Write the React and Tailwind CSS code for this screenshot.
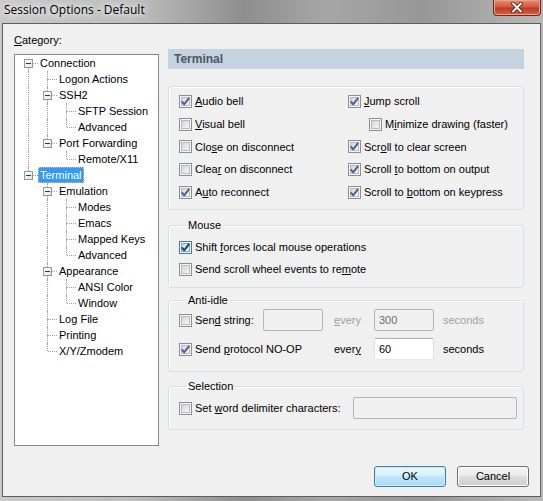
import React from 'react';

// Win7 style checkbox
const Check = ({ checked, hot }) => (
  <svg width="13" height="13" viewBox="0 0 13 13" className="shrink-0">
    <defs>
      <linearGradient id="cbInner" x1="0" y1="0" x2="1" y2="1">
        <stop offset="0" stopColor="#cfd3d8" />
        <stop offset="1" stopColor="#f8f8f8" />
      </linearGradient>
    </defs>
    <rect x="0.5" y="0.5" width="12" height="12" fill="#f5f5f5" stroke={hot ? '#3c7fb1' : '#8e8f8f'} />
    <rect x="2.5" y="2.5" width="8" height="8" fill="url(#cbInner)" stroke={hot ? '#79a9cf' : '#b8bcc1'} />
    {checked && (
      <path d="M2.8 6.4 L5.2 9.3 L10.2 2.8" fill="none" stroke={hot ? '#1f3a8a' : '#4a5f97'} strokeWidth="1.9" strokeLinejoin="round" />
    )}
  </svg>
);

const Opt = ({ checked, hot, children, className = '' }) => (
  <label className={`flex items-center gap-[3px] ${className}`}>
    <Check checked={checked} hot={hot} />
    <span className="whitespace-nowrap">{children}</span>
  </label>
);

// tree rows: level, has children, last sibling, guides for ancestor columns
const tree = [
  { label: 'Connection', level: 0, kids: true, last: false, guides: [], root: 'first' },
  { label: 'Logon Actions', level: 1, last: false, guides: [true] },
  { label: 'SSH2', level: 1, kids: true, last: false, guides: [true] },
  { label: 'SFTP Session', level: 2, last: false, guides: [true, true] },
  { label: 'Advanced', level: 2, last: true, guides: [true, true] },
  { label: 'Port Forwarding', level: 1, kids: true, last: true, guides: [true] },
  { label: 'Remote/X11', level: 2, last: true, guides: [true, false] },
  { label: 'Terminal', level: 0, kids: true, last: true, guides: [], selected: true },
  { label: 'Emulation', level: 1, kids: true, last: false, guides: [false] },
  { label: 'Modes', level: 2, last: false, guides: [false, true] },
  { label: 'Emacs', level: 2, last: false, guides: [false, true] },
  { label: 'Mapped Keys', level: 2, last: false, guides: [false, true] },
  { label: 'Advanced', level: 2, last: true, guides: [false, true] },
  { label: 'Appearance', level: 1, kids: true, last: false, guides: [false] },
  { label: 'ANSI Color', level: 2, last: false, guides: [false, true] },
  { label: 'Window', level: 2, last: true, guides: [false, true] },
  { label: 'Log File', level: 1, last: false, guides: [false] },
  { label: 'Printing', level: 1, last: false, guides: [false] },
  { label: 'X/Y/Zmodem', level: 1, last: true, guides: [false] },
];

const TreeRow = ({ row }) => (
  <div className="flex h-4 items-center">
    {row.guides.map((g, i) => (
      <div key={i} className="relative h-full w-[19px] shrink-0">
        {g && <div className="absolute left-[9px] top-0 bottom-0 border-l border-dotted border-[#a0a0a0]" />}
      </div>
    ))}
    <div className="relative h-full w-[19px] shrink-0">
      {row.root !== 'first' && <div className="absolute left-[9px] top-0 h-2 border-l border-dotted border-[#a0a0a0]" />}
      {!row.last && <div className="absolute left-[9px] top-2 bottom-0 border-l border-dotted border-[#a0a0a0]" />}
      <div className="absolute left-[10px] right-0 top-2 border-t border-dotted border-[#a0a0a0]" />
      {row.kids && (
        <div className="absolute left-[5px] top-[4px] flex h-[9px] w-[9px] items-center justify-center border border-[#8e9aa6] bg-gradient-to-br from-white to-[#dfe4ea]">
          <div className="h-px w-[5px] bg-[#1e395b]" />
        </div>
      )}
    </div>
    <span
      className={`whitespace-nowrap border px-px leading-[14px] ${
        row.selected ? 'border-dotted border-[#e8c070] bg-[#3399ff] text-white' : 'border-transparent text-black'
      }`}
    >
      {row.label}
    </span>
  </div>
);

const Group = ({ title, className = '', children }) => (
  <fieldset className={`rounded-[3px] border border-[#d5dfe5] shadow-[inset_1px_1px_0_#fff] ${className}`}>
    <legend className="ml-[7px] px-[2px] leading-[14px]">{title}</legend>
    {children}
  </fieldset>
);

const TextBox = ({ value, disabled, className = '' }) => (
  <div
    className={`flex h-[22px] items-center rounded-[2px] border pl-[4px] ${
      disabled ? 'border-[#b5b5b5] bg-[#f0f0f0] text-[#6d6d6d]' : 'border-[#abadb3] border-b-[#e3e9ef] border-l-[#e2e3ea] border-r-[#dbdfe6] bg-white text-black'
    } ${className}`}
  >
    {value}
  </div>
);

const Button = ({ children, primary }) => (
  <button
    className={`h-[21px] w-[72px] rounded-[3px] border text-black ${
      primary
        ? 'border-[#3c7fb1] bg-[linear-gradient(#eaf6fd_0%,#d9f0fc_45%,#bee6fd_50%,#a7d9f5_100%)] shadow-[inset_0_0_0_1px_#c9eafd]'
        : 'border-[#707070] bg-[linear-gradient(#f2f2f2_0%,#ebebeb_45%,#dddddd_50%,#cfcfcf_100%)] shadow-[inset_0_0_0_1px_#fcfcfc]'
    }`}
  >
    {children}
  </button>
);

export default function App() {
  return (
    <div className="flex h-[501px] w-[543px] flex-col bg-[linear-gradient(90deg,#c9c9c9_0%,#bdbdbd_25%,#8e8e8e_45%,#a6a6a6_60%,#979797_78%,#b8b8b8_100%)] font-['Liberation_Sans',Arial,sans-serif] text-[11px] text-black">
      {/* title bar */}
      <div className="flex h-[23px] shrink-0 items-start justify-between">
        <div className="pl-[4px] pt-[2px] font-['Open_Sans',sans-serif] text-[12px] leading-[16px] [text-shadow:0_0_6px_#fff,0_0_10px_#fff]">
          Session Options - Default
        </div>
        <div className="mr-[2px] flex h-[16px] w-[48px] items-center justify-center rounded-b-[4px] border border-t-0 border-[#6b2a21] bg-[linear-gradient(#e08e7a_0%,#d2593f_45%,#c23a1e_55%,#d26548_100%)] shadow-[inset_0_0_0_1px_#eaa08e]">
          <svg width="12" height="11" viewBox="0 0 12 11">
            <path d="M2 1.5 L10 9.5 M10 1.5 L2 9.5" stroke="#4a1a12" strokeWidth="3.6" strokeLinecap="round" />
            <path d="M2 1.5 L10 9.5 M10 1.5 L2 9.5" stroke="#ffffff" strokeWidth="2" strokeLinecap="round" />
          </svg>
        </div>
      </div>

      {/* dialog body */}
      <div className="mx-[2px] flex h-[474px] shrink-0 flex-col border border-[#5e5e5e] bg-[#f0f0f0] pl-[11px] pt-[9px]">
        <div className="flex items-start gap-[9px]">
          {/* category tree */}
          <div className="flex w-[145px] shrink-0 flex-col">
            <div className="leading-[15px]">
              <u className="no-underline"><span className="underline">C</span></u>ategory:
            </div>
            <div className="mt-[6px] h-[392px] border border-[#828790] bg-white pl-[4px]">
              {tree.map((row, i) => (
                <TreeRow key={i} row={row} />
              ))}
            </div>
          </div>

          {/* terminal page */}
          <div className="mt-[16px] flex w-[356px] shrink-0 flex-col">
            <div className="flex h-[20px] items-center bg-[#c5d2df] pl-[6px] text-[12px] font-bold text-[#4b5764]">Terminal</div>

            <div className="mt-[17px] grid h-[124px] grid-cols-[169px_1fr] grid-rows-[repeat(5,22.75px)] rounded-[3px] border border-[#d5dfe5] pl-[10px] pt-[3px] shadow-[inset_1px_1px_0_#fff]">
              <Opt checked><u>A</u>udio bell</Opt>
              <Opt checked><u>J</u>ump scroll</Opt>
              <Opt><u>V</u>isual bell</Opt>
              <Opt className="pl-[21px]">M<u>i</u>nimize drawing (faster)</Opt>
              <Opt>Clo<u>s</u>e on disconnect</Opt>
              <Opt checked>Scr<u>o</u>ll to clear screen</Opt>
              <Opt>Clea<u>r</u> on disconnect</Opt>
              <Opt checked>Scroll <u>t</u>o bottom on output</Opt>
              <Opt checked>A<u>u</u>to reconnect</Opt>
              <Opt checked>Scroll to <u>b</u>ottom on keypress</Opt>
            </div>

            <Group title="Mouse" className="mt-[8px] pb-[7px] pl-[10px] pt-[4px]">
              <Opt checked hot className="h-[22px]">Shift <u>f</u>orces local mouse operations</Opt>
              <Opt className="h-[22px]">Send scroll wheel events to re<u>m</u>ote</Opt>
            </Group>

            <Group title="Anti-idle" className="mt-[5px] pb-[11px] pl-[10px] pt-[2px]">
              <div className="flex h-[22px] items-center">
                <Opt className="w-[84px]">Sen<u>d</u> string:</Opt>
                <TextBox disabled className="w-[60px]" />
                <span className="ml-[11px] w-[40px] text-[#a0a0a0]"><u>e</u>very</span>
                <TextBox disabled value="300" className="w-[60px]" />
                <span className="ml-[9px] text-[#a0a0a0]">seconds</span>
              </div>
              <div className="mt-[7px] flex h-[22px] items-center">
                <Opt checked className="w-[155px]">Send <u>p</u>rotocol NO-OP</Opt>
                <span className="w-[40px]">ever<u>y</u></span>
                <TextBox value="60" className="w-[60px]" />
                <span className="ml-[9px]">seconds</span>
              </div>
            </Group>

            <Group title="Selection" className="mt-[7px] pb-[10px] pl-[10px] pt-[4px]">
              <div className="flex h-[22px] items-center">
                <Opt className="w-[174px]">Set <u>w</u>ord delimiter characters:</Opt>
                <TextBox disabled className="w-[164px]" />
              </div>
            </Group>
          </div>
        </div>

        <div className="mt-[20px] flex justify-end gap-[11px] pr-[11px]">
          <Button primary>OK</Button>
          <Button>Cancel</Button>
        </div>
      </div>
    </div>
  );
}
